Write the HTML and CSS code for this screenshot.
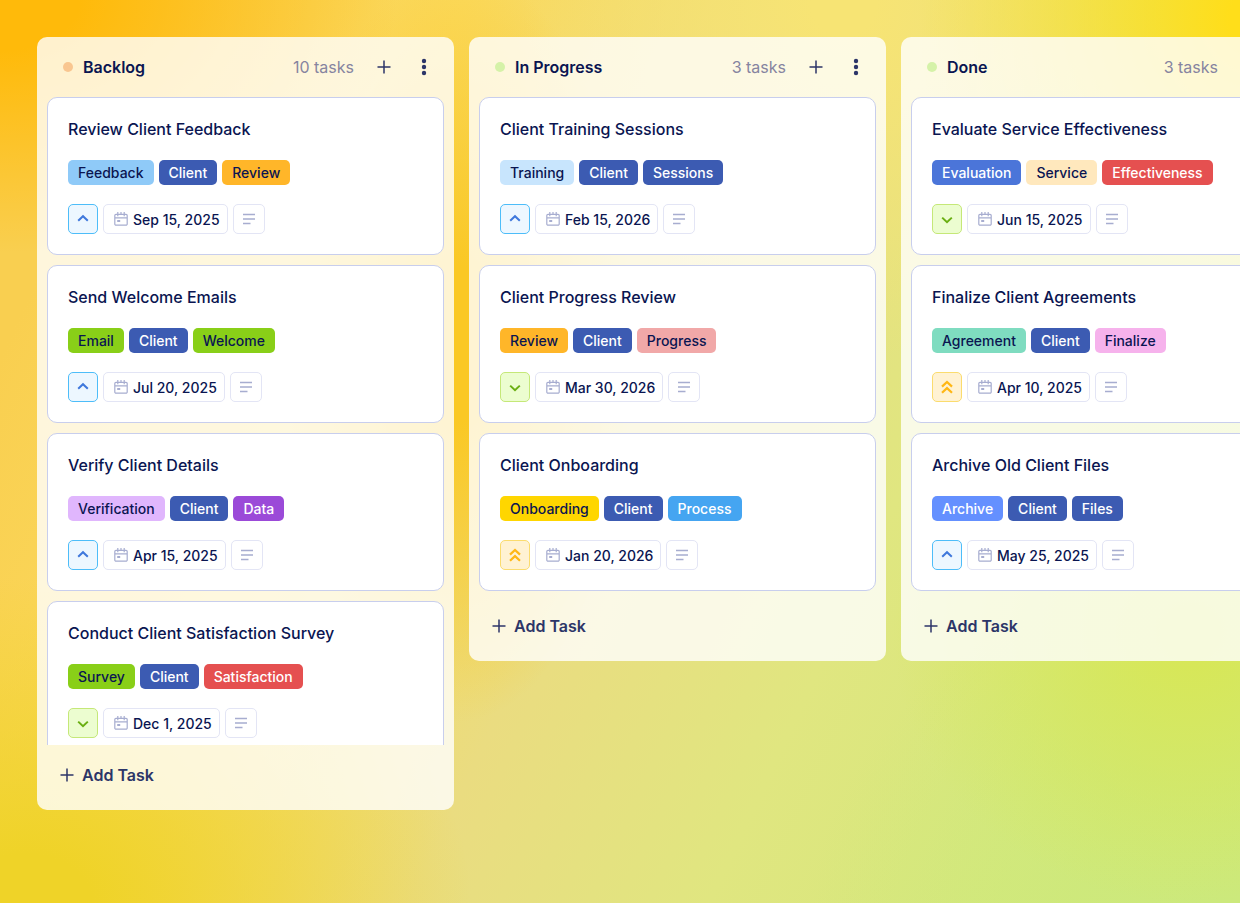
FILE: index.html
```html
<!DOCTYPE html>
<html lang="en">
<head>
  <meta charset="UTF-8">
  <meta name="viewport" content="width=device-width, initial-scale=1.0">
  <title>Client Board</title>
  <link rel="stylesheet" href="styles.css">
</head>
<body>

<!-- shared icons -->
<svg class="sprite" aria-hidden="true">
  <symbol id="plus" viewBox="0 0 14 14"><path d="M7 0.5v13M0.5 7h13" stroke-width="1.5"/></symbol>
  <symbol id="dots" viewBox="0 0 6 18"><g fill="currentColor" stroke="none"><circle cx="3" cy="3" r="2.2"/><circle cx="3" cy="9" r="2.2"/><circle cx="3" cy="15" r="2.2"/></g></symbol>
  <symbol id="up" viewBox="0 0 14 14"><path d="M2.2 8.8L7 4.2L11.8 8.8" stroke-width="2"/></symbol>
  <symbol id="down" viewBox="0 0 14 14"><path d="M2.2 5.6L7 10.2L11.8 5.6" stroke-width="2"/></symbol>
  <symbol id="double-up" viewBox="0 0 14 14"><path d="M2 6.6L7 1.9L12 6.6M2 12.8L7 8.1L12 12.8" stroke-width="2.2"/></symbol>
  <symbol id="calendar" viewBox="0 0 14 14"><path d="M2 2.4h10a1.2 1.2 0 0 1 1.2 1.2v8.4a1.2 1.2 0 0 1-1.2 1.2H2a1.2 1.2 0 0 1-1.2-1.2V3.6A1.2 1.2 0 0 1 2 2.4zM0.8 5.8h12.4M3.8 0v4.2M7 0v2.4M10.2 0v4.2" stroke-width="1.2"/><path d="M3.2 8h3v2h-3z" fill="currentColor" stroke="none"/></symbol>
  <symbol id="lines" viewBox="0 0 12 12"><path d="M0 1.5h12M0 6h12M0 10.5h7.5" stroke-width="1.3"/></symbol>
</svg>

<main class="board">

  <section class="column">
    <header class="column-header">
      <span class="dot orange"></span>
      <h2>Backlog</h2>
      <span class="count">10 tasks</span>
      <button class="icon-btn" aria-label="Add task"><svg class="i-plus"><use href="#plus"/></svg></button>
      <button class="icon-btn" aria-label="More"><svg class="i-dots"><use href="#dots"/></svg></button>
    </header>
    <div class="cards">
      <article class="card">
        <h3>Review Client Feedback</h3>
        <div class="tags"><span class="tag sky">Feedback</span><span class="tag blue">Client</span><span class="tag amber">Review</span></div>
        <div class="meta">
          <button class="priority medium" aria-label="Medium priority"><svg><use href="#up"/></svg></button>
          <button class="date"><svg><use href="#calendar"/></svg>Sep 15, 2025</button>
          <button class="note" aria-label="Description"><svg><use href="#lines"/></svg></button>
        </div>
      </article>
      <article class="card">
        <h3>Send Welcome Emails</h3>
        <div class="tags"><span class="tag green">Email</span><span class="tag blue">Client</span><span class="tag green">Welcome</span></div>
        <div class="meta">
          <button class="priority medium" aria-label="Medium priority"><svg><use href="#up"/></svg></button>
          <button class="date"><svg><use href="#calendar"/></svg>Jul 20, 2025</button>
          <button class="note" aria-label="Description"><svg><use href="#lines"/></svg></button>
        </div>
      </article>
      <article class="card">
        <h3>Verify Client Details</h3>
        <div class="tags"><span class="tag lilac">Verification</span><span class="tag blue">Client</span><span class="tag purple">Data</span></div>
        <div class="meta">
          <button class="priority medium" aria-label="Medium priority"><svg><use href="#up"/></svg></button>
          <button class="date"><svg><use href="#calendar"/></svg>Apr 15, 2025</button>
          <button class="note" aria-label="Description"><svg><use href="#lines"/></svg></button>
        </div>
      </article>
      <article class="card">
        <h3>Conduct Client Satisfaction Survey</h3>
        <div class="tags"><span class="tag green">Survey</span><span class="tag blue">Client</span><span class="tag red">Satisfaction</span></div>
        <div class="meta">
          <button class="priority low" aria-label="Low priority"><svg><use href="#down"/></svg></button>
          <button class="date"><svg><use href="#calendar"/></svg>Dec 1, 2025</button>
          <button class="note" aria-label="Description"><svg><use href="#lines"/></svg></button>
        </div>
      </article>
    </div>
    <button class="add-task"><svg class="i-plus"><use href="#plus"/></svg>Add Task</button>
  </section>

  <section class="column">
    <header class="column-header">
      <span class="dot lime"></span>
      <h2>In Progress</h2>
      <span class="count">3 tasks</span>
      <button class="icon-btn" aria-label="Add task"><svg class="i-plus"><use href="#plus"/></svg></button>
      <button class="icon-btn" aria-label="More"><svg class="i-dots"><use href="#dots"/></svg></button>
    </header>
    <div class="cards">
      <article class="card">
        <h3>Client Training Sessions</h3>
        <div class="tags"><span class="tag pale-blue">Training</span><span class="tag blue">Client</span><span class="tag blue">Sessions</span></div>
        <div class="meta">
          <button class="priority medium" aria-label="Medium priority"><svg><use href="#up"/></svg></button>
          <button class="date"><svg><use href="#calendar"/></svg>Feb 15, 2026</button>
          <button class="note" aria-label="Description"><svg><use href="#lines"/></svg></button>
        </div>
      </article>
      <article class="card">
        <h3>Client Progress Review</h3>
        <div class="tags"><span class="tag amber">Review</span><span class="tag blue">Client</span><span class="tag rose">Progress</span></div>
        <div class="meta">
          <button class="priority low" aria-label="Low priority"><svg><use href="#down"/></svg></button>
          <button class="date"><svg><use href="#calendar"/></svg>Mar 30, 2026</button>
          <button class="note" aria-label="Description"><svg><use href="#lines"/></svg></button>
        </div>
      </article>
      <article class="card">
        <h3>Client Onboarding</h3>
        <div class="tags"><span class="tag yellow">Onboarding</span><span class="tag blue">Client</span><span class="tag azure">Process</span></div>
        <div class="meta">
          <button class="priority high" aria-label="High priority"><svg><use href="#double-up"/></svg></button>
          <button class="date"><svg><use href="#calendar"/></svg>Jan 20, 2026</button>
          <button class="note" aria-label="Description"><svg><use href="#lines"/></svg></button>
        </div>
      </article>
    </div>
    <button class="add-task"><svg class="i-plus"><use href="#plus"/></svg>Add Task</button>
  </section>

  <section class="column">
    <header class="column-header">
      <span class="dot lime"></span>
      <h2>Done</h2>
      <span class="count">3 tasks</span>
      <button class="icon-btn" aria-label="Add task"><svg class="i-plus"><use href="#plus"/></svg></button>
      <button class="icon-btn" aria-label="More"><svg class="i-dots"><use href="#dots"/></svg></button>
    </header>
    <div class="cards">
      <article class="card">
        <h3>Evaluate Service Effectiveness</h3>
        <div class="tags"><span class="tag royal">Evaluation</span><span class="tag cream">Service</span><span class="tag red">Effectiveness</span></div>
        <div class="meta">
          <button class="priority low" aria-label="Low priority"><svg><use href="#down"/></svg></button>
          <button class="date"><svg><use href="#calendar"/></svg>Jun 15, 2025</button>
          <button class="note" aria-label="Description"><svg><use href="#lines"/></svg></button>
        </div>
      </article>
      <article class="card">
        <h3>Finalize Client Agreements</h3>
        <div class="tags"><span class="tag mint">Agreement</span><span class="tag blue">Client</span><span class="tag pink">Finalize</span></div>
        <div class="meta">
          <button class="priority high" aria-label="High priority"><svg><use href="#double-up"/></svg></button>
          <button class="date"><svg><use href="#calendar"/></svg>Apr 10, 2025</button>
          <button class="note" aria-label="Description"><svg><use href="#lines"/></svg></button>
        </div>
      </article>
      <article class="card">
        <h3>Archive Old Client Files</h3>
        <div class="tags"><span class="tag periwinkle">Archive</span><span class="tag blue">Client</span><span class="tag blue">Files</span></div>
        <div class="meta">
          <button class="priority medium" aria-label="Medium priority"><svg><use href="#up"/></svg></button>
          <button class="date"><svg><use href="#calendar"/></svg>May 25, 2025</button>
          <button class="note" aria-label="Description"><svg><use href="#lines"/></svg></button>
        </div>
      </article>
    </div>
    <button class="add-task"><svg class="i-plus"><use href="#plus"/></svg>Add Task</button>
  </section>

</main>

</body>
</html>
```
FILE: styles.css
```css
* {
  box-sizing: border-box;
}
body {
  margin: 0;
  font-family: Inter, "Liberation Sans", sans-serif;
  color: #0a1551;
}
h2, h3 {
  margin: 0;
}
button {
  font: inherit;
  color: inherit;
  background: none;
  border: none;
  padding: 0;
  cursor: pointer;
}
svg {
  fill: none;
  stroke: currentColor;
  display: block;
  flex: none;
}
.sprite {
  display: none;
}

/* board */
.board {
  display: flex;
  align-items: flex-start;
  gap: 15px;
  min-height: 100vh;
  padding: 37px;
  overflow-x: auto;
  scrollbar-width: none;
  background:
    radial-gradient(ellipse 32% 28% at 0% 0%, #ffba0a 20%, rgba(255, 186, 10, 0) 100%),
    radial-gradient(ellipse 28% 36% at 102% 2%, #ffde1a 10%, rgba(255, 222, 26, 0) 100%),
    radial-gradient(ellipse 14% 42% at 37% 38%, #fac824 20%, rgba(250, 200, 36, 0) 100%),
    radial-gradient(ellipse 36% 36% at 2% 100%, #efd328 15%, rgba(239, 211, 40, 0) 100%),
    radial-gradient(ellipse 24% 30% at 96% 70%, #d7e758 10%, rgba(215, 231, 88, 0) 100%),
    radial-gradient(ellipse 40% 45% at 105% 105%, #cce97c 20%, rgba(204, 233, 124, 0) 100%),
    radial-gradient(ellipse 26% 40% at 68% 0%, #f7e474 10%, rgba(247, 228, 116, 0) 100%),
    linear-gradient(115deg, #f9cf50 10%, #fbd95c 28%, #eadc80 50%, #e0e680 68%, #d2e87a 90%);
}
.column {
  flex: 0 0 417px;
  border-radius: 10px;
  background: rgba(255, 255, 255, 0.8);
}
.column-header {
  display: flex;
  align-items: center;
  height: 60px;
  padding: 0 18px 0 26px;
}
.column-header h2 {
  font-size: 16px;
  font-weight: 600;
  line-height: 20px;
}
.dot {
  width: 10px;
  height: 10px;
  margin-right: 10px;
  border-radius: 50%;
}
.dot.orange { background: #f9c690; }
.dot.lime { background: #d5f2a8; }
.count {
  margin-left: auto;
  margin-right: 2px;
  font-size: 16px;
  line-height: 20px;
  color: #8684a0;
}
.icon-btn {
  display: flex;
  align-items: center;
  justify-content: center;
  width: 24px;
  height: 24px;
  margin-left: 16px;
  color: #2c3568;
}
.i-plus {
  width: 14px;
  height: 14px;
}
.i-dots {
  width: 6px;
  height: 18px;
}

/* cards */
.cards {
  display: flex;
  flex-direction: column;
  gap: 10px;
  max-height: calc(100vh - 255px);
  padding: 0 10px 5px;
  overflow-y: auto;
  scrollbar-width: none;
}
.card {
  flex: none;
  padding: 20px;
  background: #fff;
  border: 1px solid #c8ceed;
  border-radius: 10px;
}
.card h3 {
  margin-bottom: 20px;
  font-size: 16px;
  font-weight: 500;
  line-height: 22px;
}
.tags, .meta {
  display: flex;
  gap: 5px;
}
.tags {
  margin-bottom: 19px;
}
.tag {
  padding: 0 10px;
  border-radius: 5px;
  font-size: 14px;
  font-weight: 500;
  line-height: 25px;
}
.sky { background: #8fcaf8; }
.pale-blue { background: #c8e5fd; }
.amber { background: #ffb629; }
.green { background: #89cf18; }
.lilac { background: #e0b6fd; }
.rose { background: #f1a8a8; }
.yellow { background: #ffd600; }
.cream { background: #ffe8bd; }
.mint { background: #7fdcc0; }
.pink { background: #f6b2ec; }
.blue { background: #3c5bb2; color: #fff; }
.purple { background: #9b4ad8; color: #fff; }
.red { background: #e55050; color: #fff; }
.azure { background: #45a5f1; color: #fff; }
.royal { background: #4b75d9; color: #fff; }
.periwinkle { background: #6490ff; color: #fff; }

.priority, .date, .note {
  display: flex;
  align-items: center;
  justify-content: center;
  height: 30px;
  border: 1px solid #e3e5f5;
  border-radius: 5px;
}
.priority {
  width: 30px;
}
.priority svg, .date svg {
  width: 14px;
  height: 14px;
}
.priority.medium {
  background: #edf7ff;
  border-color: #4dbdf9;
  color: #3f78dc;
}
.priority.low {
  background: #ecfdd0;
  border-color: #c5e878;
  color: #6aaf12;
}
.priority.high {
  background: #fff2d3;
  border-color: #fbdc6e;
  color: #ffb715;
}
.date {
  gap: 5px;
  padding: 0 7px 0 10px;
  font-size: 14px;
  font-weight: 500;
}
.date svg, .note svg {
  color: #a7add0;
}
.note {
  width: 32px;
}
.note svg {
  width: 12px;
  height: 12px;
}

.add-task {
  display: flex;
  align-items: center;
  gap: 8px;
  height: 60px;
  margin: 0 0 5px 23px;
  font-size: 16px;
  font-weight: 600;
  color: #2c3568;
}
```
